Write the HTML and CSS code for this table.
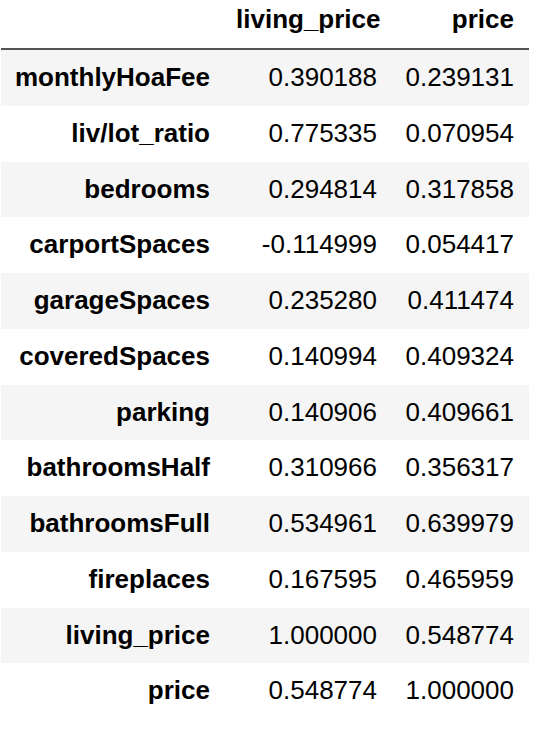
FILE: index.html
```html
<!DOCTYPE html>
<html>
<head>
<meta charset="utf-8">
<link rel="stylesheet" href="styles.css">
</head>
<body>
<table class="df">
  <colgroup>
    <col class="c-idx">
    <col class="c-a">
    <col class="c-b">
  </colgroup>
  <thead>
    <tr><th></th><th>living_price</th><th>price</th></tr>
  </thead>
  <tbody>
    <tr><th>monthlyHoaFee</th><td>0.390188</td><td>0.239131</td></tr>
    <tr><th>liv/lot_ratio</th><td>0.775335</td><td>0.070954</td></tr>
    <tr><th>bedrooms</th><td>0.294814</td><td>0.317858</td></tr>
    <tr><th>carportSpaces</th><td>-0.114999</td><td>0.054417</td></tr>
    <tr><th>garageSpaces</th><td>0.235280</td><td>0.411474</td></tr>
    <tr><th>coveredSpaces</th><td>0.140994</td><td>0.409324</td></tr>
    <tr><th>parking</th><td>0.140906</td><td>0.409661</td></tr>
    <tr><th>bathroomsHalf</th><td>0.310966</td><td>0.356317</td></tr>
    <tr><th>bathroomsFull</th><td>0.534961</td><td>0.639979</td></tr>
    <tr><th>fireplaces</th><td>0.167595</td><td>0.465959</td></tr>
    <tr><th>living_price</th><td>1.000000</td><td>0.548774</td></tr>
    <tr><th>price</th><td>0.548774</td><td>1.000000</td></tr>
  </tbody>
</table>
</body>
</html>
```

FILE: styles.css
```css
html, body {
  margin: 0;
  padding: 0;
  background: #ffffff;
}

.df {
  margin-left: 1px;
  border-collapse: collapse;
  border-spacing: 0;
  table-layout: fixed;
  width: 528px;
  font-family: "Liberation Sans", Arial, sans-serif;
  font-size: 26px;
  color: #000000;
}

.c-idx { width: 222px; }
.c-a { width: 167px; }
.c-b { width: 139px; }

.df th,
.df td {
  text-align: right;
  vertical-align: middle;
  line-height: 29.75px;
  padding: 13px 13px;
  white-space: nowrap;
  border: none;
}

.df td:last-child,
.df th:last-child {
  padding-right: 15px;
}

.df th {
  font-weight: bold;
}

.df td {
  font-weight: normal;
}

.df thead th {
  height: 30px;
  padding-top: 5px;
  padding-bottom: 13px;
  border-bottom: 2px solid #555555;
}

.df tbody tr {
  height: 55.75px;
}

.df tbody tr:nth-child(odd) {
  background: #f5f5f5;
}
```
